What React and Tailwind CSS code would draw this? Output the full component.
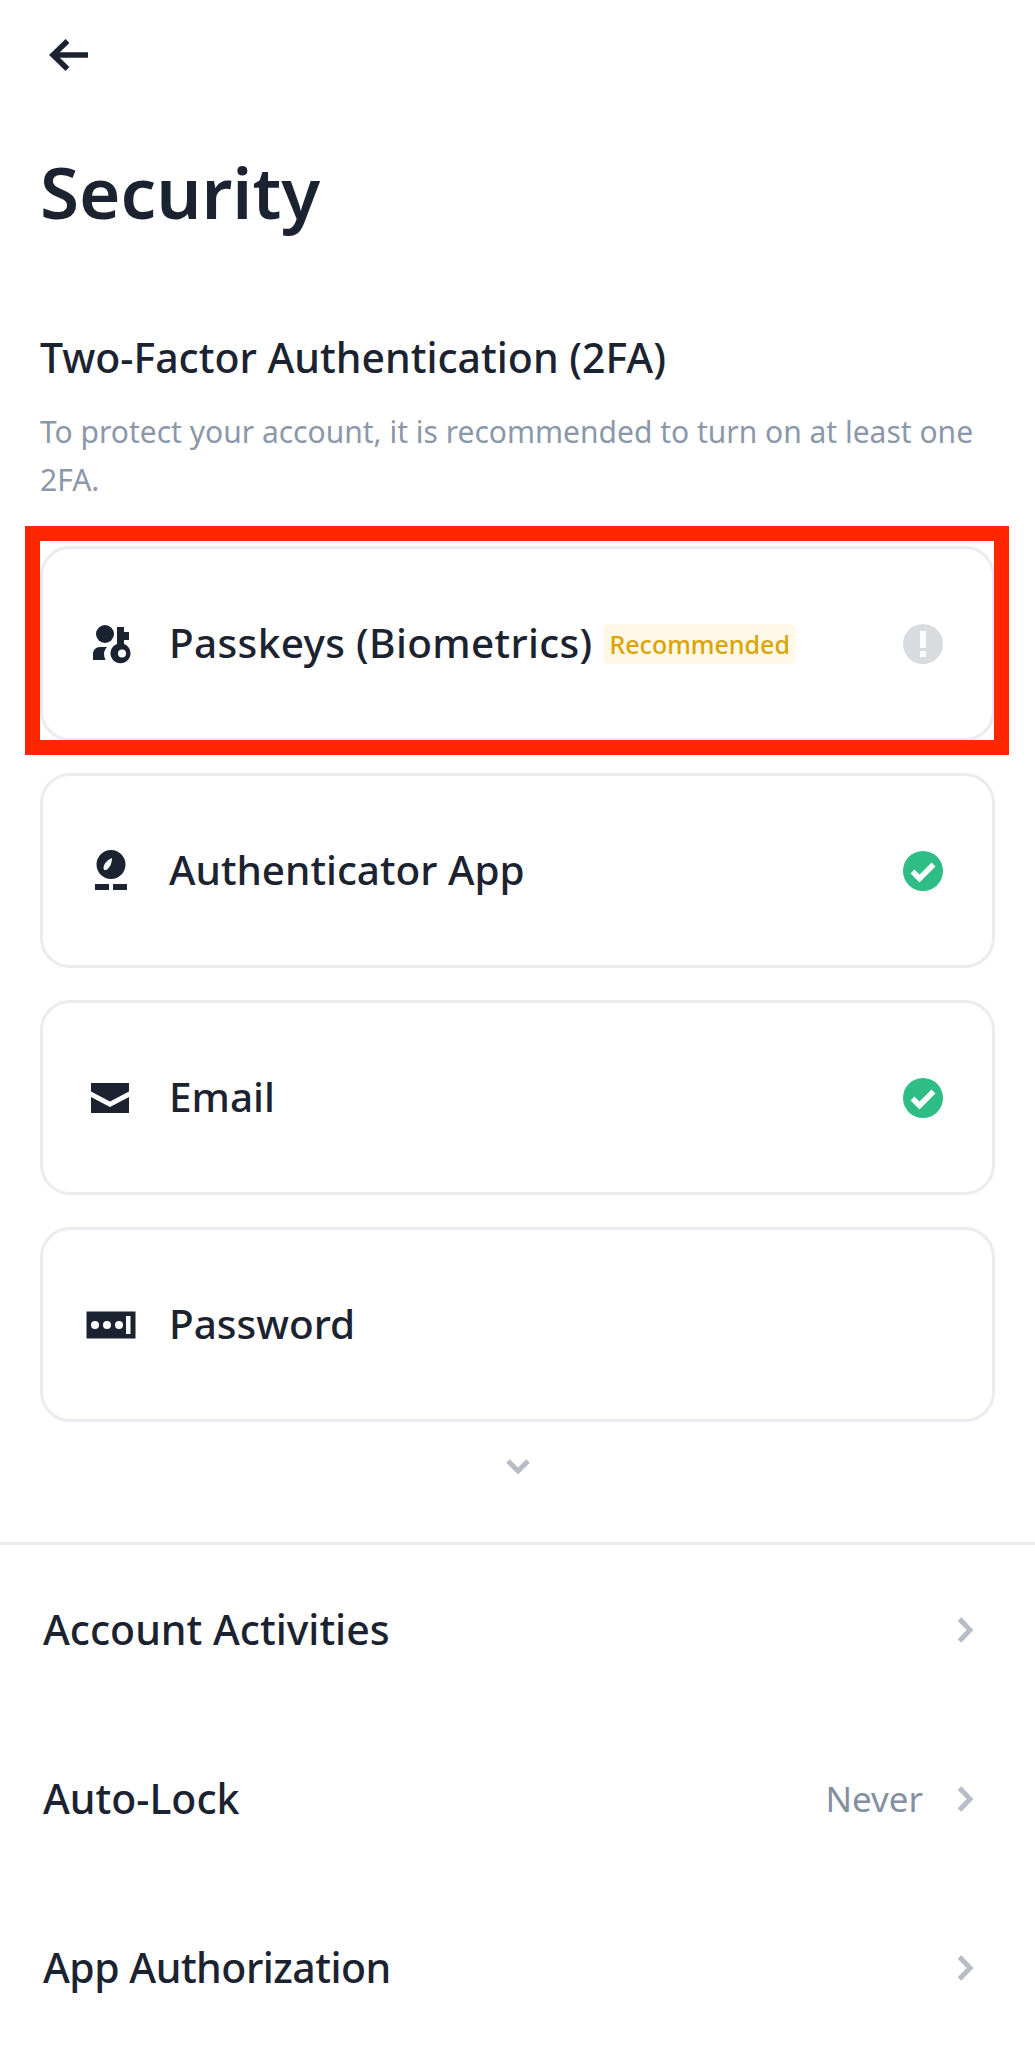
const font = { fontFamily: '"Noto Sans", Inter, sans-serif' };

function Check() {
  return (
    <svg width="40" height="40" viewBox="0 0 40 40">
      <circle cx="20" cy="20" r="20" fill="#2ebd85" />
      <path d="M9.5 20.5l7 7L30.5 13.5" fill="none" stroke="#fff" strokeWidth="5.5" />
    </svg>
  );
}

function Warn() {
  return (
    <svg width="40" height="40" viewBox="0 0 40 40">
      <circle cx="20" cy="20" r="20" fill="#d8dce1" />
      <rect x="17" y="7" width="6" height="17" fill="#fff" />
      <rect x="17" y="27" width="6" height="6" fill="#fff" />
    </svg>
  );
}

function KeyIcon() {
  return (
    <svg width="40" height="40" viewBox="0 0 40 40" fill="#1c2330">
      <circle cx="13" cy="10" r="9" />
      <path d="M1 36v-6c0-4 3-7 7-7h7c-2 2-3 5-3 7 0 2 .5 4 1.500 6z" />
      <path
        fillRule="evenodd"
        d="M25 3h7v5h5v8h-5v4a10 10 0 1 1-7 0zM30 25.500a4 4 0 1 0 0 8a4 4 0 0 0 0-8z"
      />
    </svg>
  );
}

function AppIcon() {
  return (
    <svg width="40" height="44" viewBox="0 0 40 44" fill="#1c2330">
      <path
        fillRule="evenodd"
        d="M20 1a14.500 14.500 0 1 1 0 29a14.500 14.500 0 0 1 0-29zM21 9c-4 1.500-8 5-8.500 10 0 1.500 1 2.500 2.500 2 3-1 6-6 6-12z"
      />
      <rect x="4" y="35" width="14" height="6" />
      <rect x="22" y="35" width="14" height="6" />
    </svg>
  );
}

function MailIcon() {
  return (
    <svg width="40" height="32" viewBox="0 0 40 32" fill="#1c2330">
      <path d="M1 1h38v8.500L20 19.500 1 9.500z" />
      <path d="M1 15l19 10 19-10v16H1z" />
    </svg>
  );
}

function PasswordIcon() {
  return (
    <svg width="50" height="28" viewBox="0 0 50 28">
      <rect x="0.500" y="0.500" width="49" height="27" fill="#1c2330" />
      <circle cx="9" cy="14" r="4" fill="#fff" />
      <circle cx="21" cy="14" r="4" fill="#fff" />
      <circle cx="33" cy="14" r="4" fill="#fff" />
      <rect x="40" y="5" width="4.500" height="18" fill="#fff" />
    </svg>
  );
}

function BackArrow() {
  return (
    <svg width="42" height="34" viewBox="0 0 42 34" fill="none" stroke="#1c2330" strokeWidth="5.500">
      <path d="M41 17H6" />
      <path d="M20.500 3L6 17l14.500 14" />
    </svg>
  );
}

function ChevronRight() {
  return (
    <svg width="16" height="26" viewBox="0 0 16 26" fill="none" stroke="#b7bdc6" strokeWidth="5">
      <path d="M2.500 2L13 13 2.500 24" />
    </svg>
  );
}

function ChevronDown() {
  return (
    <svg width="24" height="16" viewBox="0 0 24 16" fill="none" stroke="#b7bdc6" strokeWidth="5">
      <path d="M2 2l10 10L22 2" />
    </svg>
  );
}

function Card({ icon, iconClass, label, labelClass, badge, status, boxed }) {
  return (
    <div className="relative h-[195px] rounded-[30px] border-[3px] border-[#eaecef] bg-white flex items-center pl-[43px] pr-[49px]">
      <div className="w-[83px] shrink-0 flex items-center">
        <div className={iconClass}>{icon}</div>
      </div>
      <span className={"text-[40.5px] font-medium text-[#1c2330] leading-none whitespace-nowrap " + (labelClass || "")}>
        {label}
      </span>
      {badge && (
        <span className="ml-[11px] h-[40px] px-[6px] rounded-[5px] bg-[#fff8e9] text-[#dca400] text-[25px] font-medium leading-[40px] whitespace-nowrap">
          {badge}
        </span>
      )}
      <div className="ml-auto shrink-0 flex">{status}</div>
      {boxed && (
        <div className="absolute -left-[18px] -top-[23px] w-[984px] h-[229px] border-[15px] border-[#ff2600] pointer-events-none" />
      )}
    </div>
  );
}

function Row({ label, labelClass, value }) {
  return (
    <div className="h-[169px] flex items-center pl-[43px] pr-[62px]">
      <span className={"text-[41px] font-medium text-[#1c2330] leading-none " + (labelClass || "")}>{label}</span>
      <div className="ml-auto flex items-center gap-[34px]">
        {value && <span className="text-[35px] text-[#848f9f] leading-none">{value}</span>}
        <ChevronRight />
      </div>
    </div>
  );
}

export default function App() {
  return (
    <div style={font} className="w-[1035px] h-[2048px] overflow-hidden bg-white">
      <div className="pt-[38px] pl-[47px] flex">
        <BackArrow />
      </div>
      <h1 className="mt-[70px] pl-[40px] text-[71px] leading-[100px] font-semibold text-[#1c2330]">Security</h1>
      <div className="px-[40px]">
        <h2 className="mt-[87px] text-[41px] leading-[56px] font-medium text-[#1c2330]">
          Two-Factor Authentication (2FA)
        </h2>
        <p className="mt-[23px] text-[30px] leading-[48px] text-[#8b98a9]">
          To protect your account, it is recommended to turn on at least one 2FA.
        </p>
        <div className="mt-[42px] flex flex-col gap-[32px]">
          <Card
            boxed
            icon={<KeyIcon />}
            iconClass="ml-[6px]"
            label="Passkeys (Biometrics)"
            labelClass="tracking-[0.35px]"
            badge="Recommended"
            status={<Warn />}
          />
          <Card icon={<AppIcon />} iconClass="ml-[5px]" label="Authenticator App" status={<Check />} />
          <Card icon={<MailIcon />} iconClass="ml-[4px]" label="Email" status={<Check />} />
          <Card icon={<PasswordIcon />} label="Password" />
        </div>
        <div className="mt-[37px] flex justify-center">
          <ChevronDown />
        </div>
      </div>
      <div className="mt-[67px] h-[3px] bg-[#eaecef]" />
      <Row label="Account Activities" />
      <Row label="Auto-Lock" value="Never" />
      <Row label="App Authorization" labelClass="tracking-[-0.5px]" />
    </div>
  );
}
